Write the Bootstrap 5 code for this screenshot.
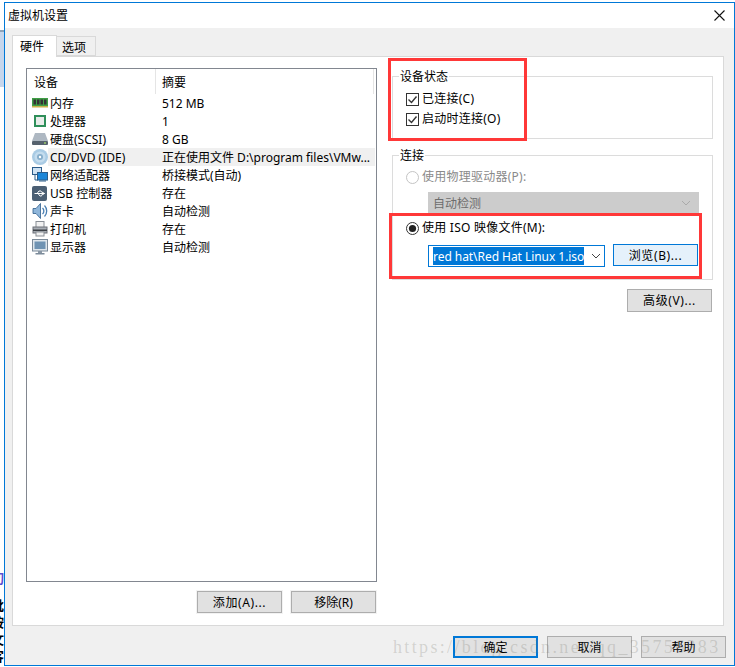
<!DOCTYPE html>
<html lang="zh-CN">
<head>
<meta charset="utf-8">
<title>虚拟机设置</title>
<link rel="stylesheet" href="https://cdn.jsdelivr.net/npm/bootstrap@5.3.0/dist/css/bootstrap.min.css">
<style>
html,body{margin:0;height:667px;overflow:hidden;background:#fff}
body{font-family:"Noto Sans","Noto Sans CJK SC",sans-serif;font-size:12px;line-height:16px;color:#000;position:relative}
.desk-strip{width:4px;height:667px;overflow:hidden;flex:none}
.desk-sky{height:57px;margin-top:30px;background:#c6d6ec;border-top:2px solid #8fa3b8}
.desk-chars{margin-top:482px;width:4px;display:flex;flex-direction:column;align-items:flex-end;font:700 13px/17px "Noto Sans CJK SC",sans-serif;white-space:nowrap}
.desk-chars span{display:block;direction:rtl}
.desk-chars .tint{color:#5b4fd0}
.desk-chars .spacer{height:10px}
.vm-win{width:731px;height:664px;margin-top:2px;border:1px solid #0078d7;background:#f0f0f0;display:flex;flex-direction:column}
.vm-title{height:25px;flex:none;background:#fff;padding-left:3px;line-height:25px;display:flex;justify-content:space-between;align-items:center}
.vm-close{margin-right:9px;display:block}
.vm-body{padding:7px 10px 0 7px;flex:none}
.vm-tabs.nav-tabs{border:0;height:21px;--bs-nav-tabs-border-width:0;align-items:flex-end;position:relative;z-index:1}
.vm-tabs .nav-link{padding:0;border-radius:0;color:#000;font-size:12px;line-height:16px;margin:0}
.vm-tabs .nav-link.active{width:45px;height:22px;margin-bottom:-1px;background:#fff;border:1px solid #d9d9d9;border-bottom:0;padding:3px 0 0 7px;color:#000}
.vm-tabs .nav-link.idle{width:39px;height:20px;background:#f0f0f0;border:1px solid #d9d9d9;border-left:0;padding:3px 0 0 5px}
.vm-panel{height:570px;background:#fff;border:1px solid #d9d9d9;padding:11px 10px 0 13px;display:flex;gap:15px}
.left-col{width:351px;flex:none}
.dev-list{height:514px;border:1px solid #828790;background:#fff}
.dev-head{height:25px;display:flex;margin-bottom:0}
.dev-head div{height:25px;line-height:27px}
.dev-head .head-a{width:129px;padding-left:7px;border-right:1px solid #e5e5e5}
.dev-head .head-b{width:218px;padding-left:6px;border-right:1px solid #e5e5e5}
.dev-row{height:18px;display:flex;padding-left:5px;padding-right:1px;line-height:20px;white-space:nowrap}
.dev-row svg{width:16px;height:18px;flex:none;display:block}
.dev-cells{display:flex;flex:1;height:18px}
.dev-row.sel .dev-cells{background:#f0f0f0}
.dev-name{width:114px;padding-left:2px;flex:none}
.dev-sum{flex:1;overflow:hidden}
.win-btn.btn{--bs-btn-padding-x:0;--bs-btn-padding-y:0;width:85px;height:22px;padding:1px 0 0;border-radius:0;font-size:12px;line-height:18px;color:#000;background:#e1e1e1;border:1px solid #adadad;--bs-btn-hover-bg:#e1e1e1}
.win-btn.halo{outline:1px solid #f2f2f2;padding-top:2px}
.win-btn.dots{letter-spacing:.6px}
.win-btn.focus-blue{background:#e5f1fb;border-color:#0078d7}
.win-btn.focus-main{border:2px solid #0078d7;background:#e1e1e1}
.win-btn.tall{height:23px}
.btn-row{display:flex;justify-content:flex-end;gap:9px;margin-top:9px;padding-right:1px}
.right-col{width:321px;flex:none}
.grp{border:1px solid #dcdcdc;margin:0;min-width:0}
.grp legend{float:none;width:auto;font-size:12px;line-height:16px;margin:0 0 0 -7px;padding:2px 1px 0}
.grp-a{height:72px;padding:0 0 0 13px;margin-top:-1px}
.grp-b{height:134px;margin-top:7px;padding:0 0 0 13px}
.tick-line{display:flex;align-items:center;gap:3px;height:20px;letter-spacing:.25px}
.tick-line.off{color:#8a8a8a}
.tick-line .form-check-input{margin:0;width:13px;height:13px;flex:none;border:1px solid #333;border-radius:0;opacity:1}
.tick-line .form-check-input:checked{background-color:#fff;border-color:#333;background-size:13px 13px;background-image:url("data:image/svg+xml,%3Csvg xmlns='http://www.w3.org/2000/svg' viewBox='0 0 13 13'%3E%3Cpath d='M2.5 6.5l3 3 5-6' fill='none' stroke='%23333' stroke-width='1.4'/%3E%3C/svg%3E")}
.tick-line .form-check-input[type=radio]{border-radius:50%;border-color:#333}
.tick-line .form-check-input[type=radio]:checked{background-image:url("data:image/svg+xml,%3Csvg xmlns='http://www.w3.org/2000/svg' viewBox='0 0 13 13'%3E%3Ccircle cx='6.5' cy='6.5' r='3.6' fill='%23222'/%3E%3C/svg%3E")}
.tick-line .form-check-input:disabled{border-color:#c4c4c4;background-color:#fff}
.tick-a{margin-top:4px}
.tick-b{margin-top:5px;height:16px}
.drive-sel.form-select{width:271px;height:22px;margin:7px 0 0 22px;padding:1px 0 0 4px;border:1px solid #ccc;border-radius:0;background-color:#ccc;background-size:14px 10px;background-position:right 5px center;font-size:12px;line-height:20px;color:#6d6d6d;background-image:url("data:image/svg+xml,%3Csvg xmlns='http://www.w3.org/2000/svg' viewBox='0 0 14 10'%3E%3Cpath d='M3 3l4 4 4-4' fill='none' stroke='%23aaa' stroke-width='1'/%3E%3C/svg%3E");opacity:1}
.iso-head{margin-top:6px;height:16px}
.iso-line{display:flex;margin:8px 0 0 22px;gap:8px;align-items:flex-start}
.iso-combo{width:177px;height:22px;margin-top:1px;border:1px solid #0078d7;background:#fff;display:flex;align-items:center;padding-left:4px;white-space:nowrap}
.iso-combo .pick{background:#0078d7;color:#fff;width:151px;line-height:19px;height:18px;display:block;overflow:hidden;letter-spacing:-.05px}
.iso-combo svg{margin-left:6px;flex:none}
.more-line{display:flex;justify-content:flex-end;margin-top:9px;padding-right:1px}
.foot-row{display:flex;justify-content:flex-end;gap:9px;padding:10px 8px 0 0}
.red-box{position:absolute;border:3px solid #ff3838;pointer-events:none;z-index:3}
.red-one{left:388px;top:58px;width:139px;height:83px}
.red-two{left:389px;top:213px;width:313px;height:66px}
.water{position:absolute;left:393px;top:636px;font:18px/22px "Liberation Serif",serif;letter-spacing:2.35px;color:rgba(120,120,110,.25);white-space:nowrap;z-index:4;pointer-events:none}
</style>
</head>
<body>
<div class="d-flex">
  <div class="desk-strip">
    <div class="desk-sky"></div>
    <div class="desk-chars"><span class="tint">切</span><span class="spacer"></span><span>批</span><span>按</span><span>文</span><span>客</span></div>
  </div>
  <div class="vm-win">
    <div class="vm-title">
      <span>虚拟机设置</span>
      <svg class="vm-close" width="11" height="11" viewBox="0 0 11 11"><path d="M.5.5l10 10M10.5.5l-10 10" stroke="#111" stroke-width="1.1" fill="none"/></svg>
    </div>
    <div class="vm-body">
      <ul class="nav nav-tabs vm-tabs">
        <li class="nav-item"><a class="nav-link active" href="#">硬件</a></li>
        <li class="nav-item"><a class="nav-link idle" href="#">选项</a></li>
      </ul>
      <div class="vm-panel">
        <div class="left-col">
          <div class="dev-list">
            <div class="dev-head"><div class="head-a">设备</div><div class="head-b">摘要</div></div>
            <div class="dev-row"><svg viewBox="0 0 16 18"><rect x="0" y="4" width="16" height="9" fill="#3f9e46"/><rect x="1.5" y="5.5" width="2.5" height="5" fill="#333"/><rect x="5" y="5.5" width="2.5" height="5" fill="#333"/><rect x="8.5" y="5.5" width="2.5" height="5" fill="#333"/><rect x="12" y="5.5" width="2.5" height="5" fill="#333"/><rect x="0" y="12" width="16" height="1.5" fill="#c9b24a"/></svg><div class="dev-cells"><div class="dev-name">内存</div><div class="dev-sum">512 MB</div></div></div>
            <div class="dev-row"><svg viewBox="0 0 16 18"><rect x="2" y="3" width="12" height="12" fill="#2f8f5a"/><rect x="4" y="5" width="8" height="8" fill="#e9ecea"/></svg><div class="dev-cells"><div class="dev-name">处理器</div><div class="dev-sum">1</div></div></div>
            <div class="dev-row"><svg viewBox="0 0 16 18"><path d="M3 3h10l3 8H0z" fill="#aeb8c2"/><rect x="0" y="11" width="16" height="4" rx="1" fill="#56626e"/><circle cx="13" cy="13" r=".9" fill="#9fd36a"/></svg><div class="dev-cells"><div class="dev-name">硬盘(SCSI)</div><div class="dev-sum">8 GB</div></div></div>
            <div class="dev-row sel"><svg viewBox="0 0 16 18"><circle cx="8" cy="9" r="8" fill="#a9cbe4"/><circle cx="8" cy="9" r="5.5" fill="#c4dcee"/><circle cx="8" cy="9" r="3" fill="#86aecb"/><circle cx="8" cy="9" r="1.2" fill="#fff"/></svg><div class="dev-cells"><div class="dev-name">CD/DVD (IDE)</div><div class="dev-sum">正在使用文件 D:\program files\VMw...</div></div></div>
            <div class="dev-row"><svg viewBox="0 0 16 18"><rect x=".5" y="1.5" width="9" height="7" fill="#cfe2f3" stroke="#2b5c8a"/><rect x="5.5" y="6.5" width="10" height="7.5" fill="#1c86d8" stroke="#2b5c8a"/><path d="M3 9v5h3M7 15h7" stroke="#2b5c8a" fill="none"/></svg><div class="dev-cells"><div class="dev-name">网络适配器</div><div class="dev-sum">桥接模式(自动)</div></div></div>
            <div class="dev-row"><svg viewBox="0 0 16 18"><rect x="0" y="2" width="15" height="15" rx="2" fill="#4b5f74"/><path d="M2.5 9.5h10M9 7.5l3.5 2-3.5 2M5 9.5l2-2.5h2M6 9.5l2 2.5h1.5" stroke="#fff" stroke-width="1" fill="none"/></svg><div class="dev-cells"><div class="dev-name">USB 控制器</div><div class="dev-sum">存在</div></div></div>
            <div class="dev-row"><svg viewBox="0 0 16 18"><path d="M1 6.5h3L8.5 1.5v15L4 11.5H1z" fill="#8fb6da" stroke="#2e5d8c" stroke-width=".8"/><path d="M10.5 6a4 4 0 0 1 0 6M12.5 3.5a8 8 0 0 1 0 11" stroke="#4a7fb2" stroke-width="1.3" fill="none"/></svg><div class="dev-cells"><div class="dev-name">声卡</div><div class="dev-sum">自动检测</div></div></div>
            <div class="dev-row"><svg viewBox="0 0 16 18"><rect x="4" y="1.5" width="8" height="6" fill="#f2f2f2" stroke="#8a8f96"/><rect x="1" y="7" width="14" height="6" fill="#a9aeb5" stroke="#6d7178"/><rect x="1" y="9.5" width="14" height="1.5" fill="#3d4147"/><rect x="4" y="12" width="8" height="4" fill="#f2f2f2" stroke="#8a8f96"/></svg><div class="dev-cells"><div class="dev-name">打印机</div><div class="dev-sum">存在</div></div></div>
            <div class="dev-row"><svg viewBox="0 0 16 18"><rect x=".5" y="1.5" width="15" height="11.5" fill="#dfe6ec" stroke="#7b8a99"/><rect x="2.5" y="3.5" width="11" height="7.5" fill="#6f93b3"/><rect x="6" y="13" width="4" height="2" fill="#8a97a5"/><rect x="3.5" y="15" width="9" height="1.5" fill="#7b8a99"/></svg><div class="dev-cells"><div class="dev-name">显示器</div><div class="dev-sum">自动检测</div></div></div>
          </div>
          <div class="btn-row">
            <button type="button" class="btn win-btn halo dots">添加(A)...</button>
            <button type="button" class="btn win-btn halo">移除(R)</button>
          </div>
        </div>
        <div class="right-col">
          <fieldset class="grp grp-a">
            <legend>设备状态</legend>
            <label class="tick-line tick-a"><input class="form-check-input" type="checkbox" checked>已连接(C)</label>
            <label class="tick-line"><input class="form-check-input" type="checkbox" checked>启动时连接(O)</label>
          </fieldset>
          <fieldset class="grp grp-b">
            <legend>连接</legend>
            <label class="tick-line off tick-b"><input class="form-check-input" type="radio" name="src" disabled>使用物理驱动器(P):</label>
            <select class="form-select drive-sel" disabled><option>自动检测</option></select>
            <label class="tick-line iso-head"><input class="form-check-input" type="radio" name="src2" checked>使用 ISO 映像文件(M):</label>
            <div class="iso-line">
              <div class="iso-combo"><span class="pick">red hat\Red Hat Linux 1.iso</span><svg width="12" height="8" viewBox="0 0 12 8"><path d="M2 2l4 4 4-4" fill="none" stroke="#444" stroke-width="1"/></svg></div>
              <button type="button" class="btn win-btn focus-blue dots">浏览(B)...</button>
            </div>
          </fieldset>
          <div class="more-line"><button type="button" class="btn win-btn tall dots">高级(V)...</button></div>
        </div>
      </div>
    </div>
    <div class="foot-row">
      <button type="button" class="btn win-btn focus-main">确定</button>
      <button type="button" class="btn win-btn">取消</button>
      <button type="button" class="btn win-btn">帮助</button>
    </div>
  </div>
</div>
<div class="red-box red-one"></div>
<div class="red-box red-two"></div>
<div class="water">https://blog.csdn.net/qq_35756383</div>
<script src="https://cdn.jsdelivr.net/npm/bootstrap@5.3.0/dist/js/bootstrap.bundle.min.js"></script>
</body>
</html>
